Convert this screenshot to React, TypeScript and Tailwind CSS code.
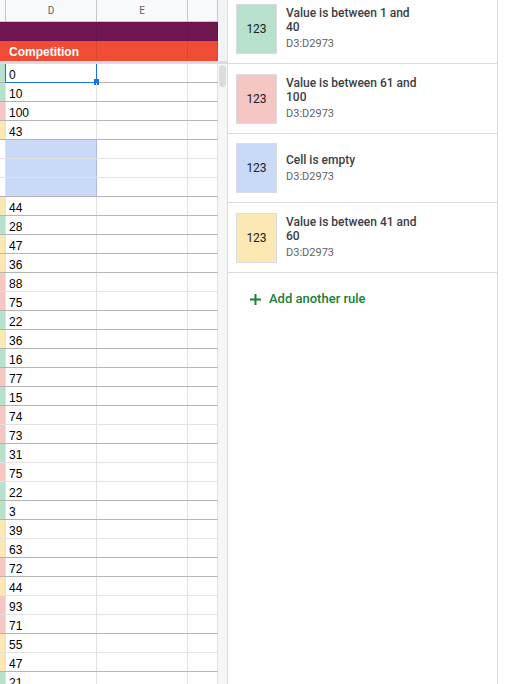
import React from "react";

type Row = { v: string; c: "g" | "p" | "y" | "n"; dark: boolean; sel?: boolean };

const rows: Row[] = [
  { v: "0", c: "g", dark: true },
  { v: "10", c: "g", dark: true },
  { v: "100", c: "p", dark: true },
  { v: "43", c: "y", dark: true },
  { v: "", c: "n", dark: false, sel: true },
  { v: "", c: "n", dark: false, sel: true },
  { v: "", c: "n", dark: true, sel: true },
  { v: "44", c: "y", dark: true },
  { v: "28", c: "g", dark: true },
  { v: "47", c: "y", dark: true },
  { v: "36", c: "y", dark: true },
  { v: "88", c: "p", dark: false },
  { v: "75", c: "p", dark: true },
  { v: "22", c: "g", dark: true },
  { v: "36", c: "y", dark: true },
  { v: "16", c: "g", dark: true },
  { v: "77", c: "p", dark: true },
  { v: "15", c: "g", dark: true },
  { v: "74", c: "p", dark: false },
  { v: "73", c: "p", dark: true },
  { v: "31", c: "g", dark: false },
  { v: "75", c: "p", dark: false },
  { v: "22", c: "g", dark: true },
  { v: "3", c: "g", dark: true },
  { v: "39", c: "y", dark: false },
  { v: "63", c: "y", dark: true },
  { v: "72", c: "p", dark: true },
  { v: "44", c: "y", dark: false },
  { v: "93", c: "p", dark: false },
  { v: "71", c: "p", dark: true },
  { v: "55", c: "y", dark: false },
  { v: "47", c: "y", dark: true },
  { v: "21", c: "g", dark: true },
];

const stripBg: Record<string, string> = {
  g: "bg-[#b7e1cd]",
  p: "bg-[#f4c7c3]",
  y: "bg-[#fce8b2]",
  n: "bg-white",
};

function GridRow({ r, i }: { r: Row; i: number }) {
  const rowBorder = r.dark ? "border-[#b4b4b4]" : "border-[#e2e2e2]";
  return (
    <div className={`flex h-[19px] shrink-0 border-b ${rowBorder}`}>
      <div className={`w-[6px] border-r border-[#e2e2e2] ${stripBg[r.c]}`} />
      <div
        className={`relative w-[91px] border-r flex items-end pl-[3px] text-[12px] leading-[14px] text-black ${
          r.sel ? "bg-[#c9daf8] border-[#a9bbdd]" : "border-[#e2e2e2]"
        }`}
      >
        {r.v}
        {i === 0 && (
          <>
            <div className="absolute left-[-1px] top-0 right-[-1px] bottom-[-1px] border border-t-0 border-[#1a73e8]" />
            <div className="absolute right-[-3px] bottom-[-3px] w-[5px] h-[6px] bg-[#1a73e8]" />
          </>
        )}
      </div>
      <div className="w-[91px] border-r border-[#e2e2e2]" />
      <div className="w-[30px] border-r border-[#e2e2e2]" />
    </div>
  );
}

function Rule({
  bg,
  title,
  h,
  first,
}: {
  bg: string;
  title: React.ReactNode;
  h: string;
  first?: boolean;
}) {
  return (
    <div className={`flex items-center ${h} shrink-0 border-b border-[#dadce0] pl-[8px] ${first ? "-mt-[6px]" : ""}`}>
      <div
        className={`w-[41px] h-[50px] border border-[#dadce0] ${bg} flex items-center justify-center text-[12px] text-[#202124]`}
      >
        123
      </div>
      <div className="ml-[9px] w-[132px] flex flex-col pt-[1px]">
        <div className="text-[12px] leading-[14px] font-medium text-[#3c4043]">{title}</div>
        <div className="mt-[2px] text-[11px] leading-[16px] text-[#5f6368]">D3:D2973</div>
      </div>
    </div>
  );
}

export default function App() {
  return (
    <div className="w-[508px] h-[684px] overflow-hidden bg-white flex" style={{ fontFamily: "Roboto, 'Liberation Sans', sans-serif" }}>
      {/* Grid */}
      <div className="w-[218px] flex flex-col shrink-0" style={{ fontFamily: "'Liberation Sans', Arial, sans-serif" }}>
        {/* Column headers */}
        <div className="flex h-[22px] shrink-0 bg-[#f8f9fa] border-b border-[#c7c7c7] text-[10px] text-[#5f6368]" style={{ fontFamily: "Roboto, sans-serif" }}>
          <div className="w-[6px] border-r border-[#c7c7c7]" />
          <div className="w-[91px] border-r border-[#c7c7c7] flex items-center justify-center">D</div>
          <div className="w-[91px] border-r border-[#c7c7c7] flex items-center justify-center">E</div>
          <div className="w-[30px] border-r border-[#c7c7c7]" />
        </div>
        {/* Purple band */}
        <div className="flex h-[19px] shrink-0 bg-[#6f1651]">
          <div className="w-[97px] border-r border-[#63134a]" />
          <div className="w-[91px] border-r border-[#63134a]" />
          <div className="w-[30px] border-r border-[#63134a]" />
        </div>
        {/* Orange band */}
        <div className="flex h-[20px] shrink-0 bg-[#f04c36]">
          <div className="w-[97px] border-r border-[#dc4531] flex items-center pl-[9px] pt-[1px] text-[12px] font-bold text-white">
            Competition
          </div>
          <div className="w-[91px] border-r border-[#dc4531]" />
          <div className="w-[30px] border-r border-[#dc4531]" />
        </div>
        {/* Freeze bar */}
        <div className="h-[3px] shrink-0 bg-[#dadce0]" />
        {rows.map((r, i) => (
          <GridRow key={i} r={r} i={i} />
        ))}
      </div>

      {/* Scroll track */}
      <div className="w-[9px] shrink-0 flex flex-col bg-[#f6f6f6]">
        <div className="h-[61px] shrink-0 bg-[#f1f3f4]" />
        <div className="h-[3px] shrink-0 bg-[#dadce0]" />
        <div className="mt-[1px] ml-[1px] w-[7px] h-[22px] rounded-full bg-[#dadce0]" />
      </div>

      {/* Side panel */}
      <div className="w-[271px] shrink-0 border-l border-r border-[#dadce0] flex flex-col">
        <Rule
          first
          h="h-[70px]"
          bg="bg-[#b7e1cd]"
          title={
            <>
              Value is between 1 and
              <br />
              40
            </>
          }
        />
        <Rule
          h="h-[70px]"
          bg="bg-[#f4c7c3]"
          title={
            <>
              Value is between 61 and
              <br />
              100
            </>
          }
        />
        <Rule h="h-[69px]" bg="bg-[#c9daf8]" title="Cell is empty" />
        <Rule
          h="h-[70px]"
          bg="bg-[#fce8b2]"
          title={
            <>
              Value is between 41 and
              <br />
              60
            </>
          }
        />
        <div className="mt-[18px] h-[16px] flex items-center pl-[22px] text-[#188038]">
          <svg width="11" height="11" viewBox="0 0 11 11" className="shrink-0">
            <rect x="4.5" y="0" width="2" height="11" fill="#188038" />
            <rect x="0" y="4.5" width="11" height="2" fill="#188038" />
          </svg>
          <span className="ml-[8px] text-[13px] font-medium leading-[16px]">Add another rule</span>
        </div>
      </div>
      <div className="flex-1" />
    </div>
  );
}
